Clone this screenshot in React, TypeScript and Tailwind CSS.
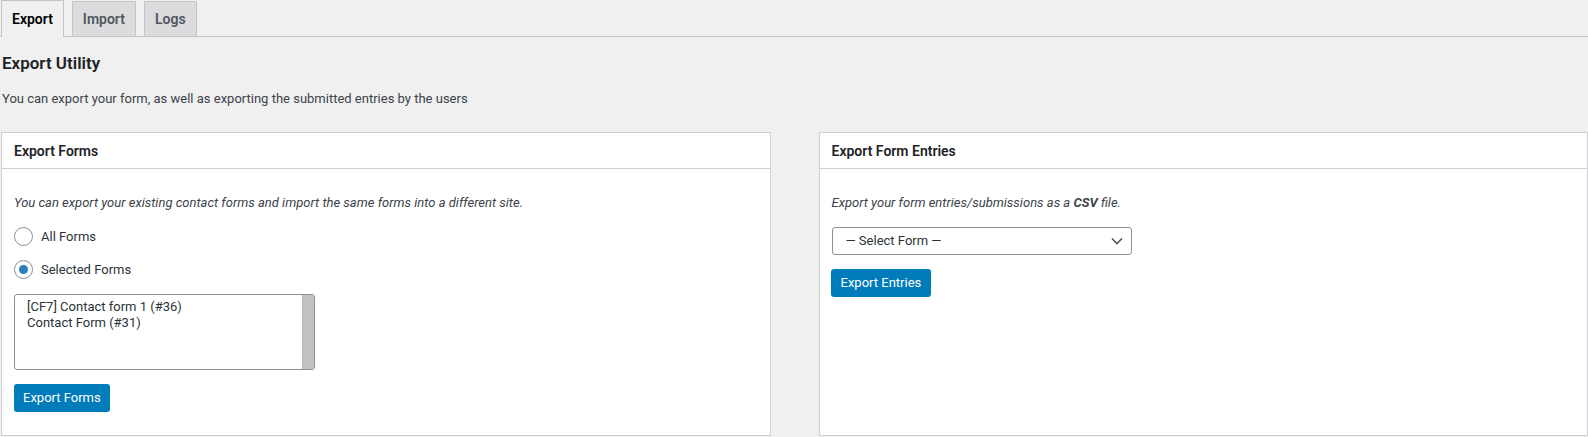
import React from "react";

function Radio({ checked, label }: { checked?: boolean; label: string }) {
  return (
    <label className="flex items-center gap-[8px] h-[19px]">
      <span className="w-[19px] h-[19px] rounded-full border border-[#8c8f94] bg-white flex items-center justify-center shrink-0">
        {checked && <span className="w-[9px] h-[9px] rounded-full bg-[#2a7fba]" />}
      </span>
      <span className="text-[13px] text-[#2c3338]">{label}</span>
    </label>
  );
}

function Panel({ title, children }: { title: string; children: React.ReactNode }) {
  return (
    <div className="flex-1 bg-white border border-[#ccd0d4] h-[304px]">
      <div className="h-[36px] border-b border-[#ccd0d4] flex items-center px-[12px]">
        <h3 className="text-[14px] font-semibold text-[#1d2327] leading-none pt-[1px]">{title}</h3>
      </div>
      <div className="px-[12px]">{children}</div>
    </div>
  );
}

export default function App() {
  return (
    <div
      className="w-[1588px] h-[437px] bg-[#f0f0f1] overflow-hidden text-[#3c434a]"
      style={{ fontFamily: "Roboto, 'Noto Sans', sans-serif" }}
    >
      <div className="flex items-end border-b border-[#c3c4c7] h-[37px] pl-[1px] gap-[8px]">
        <div className="px-[10px] border border-b-0 border-[#c3c4c7] bg-[#f0f0f1] text-[14px] font-semibold text-black flex items-center -mb-[1px] h-[37px]">
          Export
        </div>
        <div className="h-[35px] px-[10px] border border-b-0 border-[#c3c4c7] bg-[#dcdcde] text-[14px] font-semibold text-[#50575e] flex items-center">
          Import
        </div>
        <div className="h-[35px] px-[10px] border border-b-0 border-[#c3c4c7] bg-[#dcdcde] text-[14px] font-semibold text-[#50575e] flex items-center">
          Logs
        </div>
      </div>
      <div className="px-[2px]">
        <h2 className="text-[17px] font-semibold text-[#1d2327] leading-[22px] mt-[15px]">Export Utility</h2>
        <p className="text-[13px] leading-[20px] mt-[15px]">
          You can export your form, as well as exporting the submitted entries by the users
        </p>
      </div>
      <div className="flex gap-[48px] pl-[1px] mt-[23px]">
        <Panel title="Export Forms">
          <p className="text-[13px] italic leading-[20px] mt-[24px]">
            You can export your existing contact forms and import the same forms into a different site.
          </p>
          <div className="mt-[14px] flex flex-col gap-[14px]">
            <Radio label="All Forms" />
            <Radio checked label="Selected Forms" />
          </div>
          <div className="mt-[15px] w-[301px] h-[76px] border border-[#8c8f94] rounded-[3px] bg-white flex overflow-hidden">
            <div className="flex-1 pl-[12px] pt-[4px] text-[13px] leading-[16px] text-[#2c3338]">
              <div>[CF7] Contact form 1 (#36)</div>
              <div>Contact Form (#31)</div>
            </div>
            <div className="w-[12px] bg-[#c1c1c1] border-l border-[#b5b5b5]" />
          </div>
          <button className="mt-[14px] h-[28px] px-[9px] rounded-[3px] bg-[#007cba] text-white text-[13px]">
            Export Forms
          </button>
        </Panel>
        <Panel title="Export Form Entries">
          <p className="text-[13px] italic leading-[20px] mt-[24px]">
            Export your form entries/submissions as a <b className="font-bold">CSV</b> file.
          </p>
          <div className="mt-[14px] w-[300px] h-[28px] border border-[#8c8f94] rounded-[3px] bg-white flex items-center justify-between pl-[13px] pr-[8px] text-[13px] text-[#2c3338]">
            <span>— Select Form —</span>
            <svg width="12" height="8" viewBox="0 0 12 8" fill="none">
              <path d="M1 1.5 L6 6.5 L11 1.5" stroke="#50575e" strokeWidth="1.6" />
            </svg>
          </div>
          <button className="mt-[14px] -ml-[1px] h-[28px] px-[10px] rounded-[3px] bg-[#007cba] text-white text-[13px]">
            Export Entries
          </button>
        </Panel>
      </div>
    </div>
  );
}
